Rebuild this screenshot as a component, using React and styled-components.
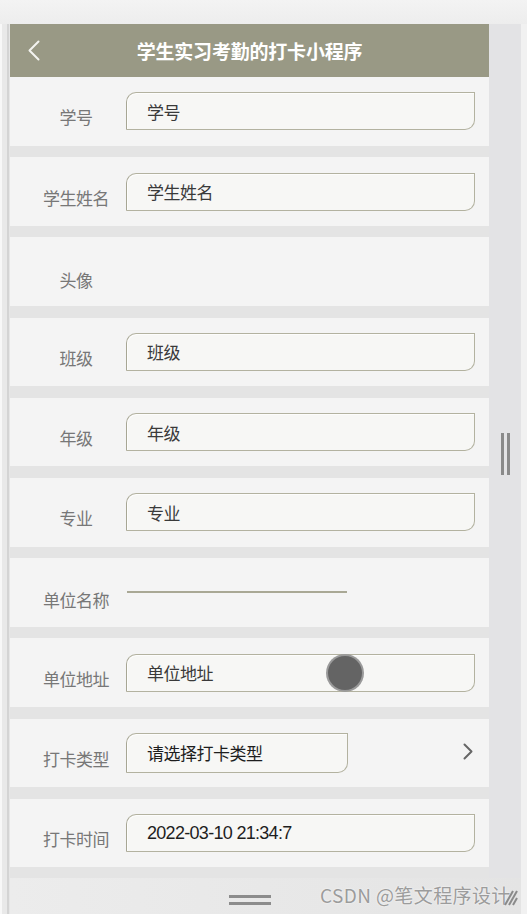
import React from "react";
import styled, { createGlobalStyle } from "styled-components";

const Global = createGlobalStyle`
  html, body { margin: 0; padding: 0; background: #efefef; }
  body { font-family: "Noto Sans CJK SC", "Noto Sans", sans-serif; }
  #root { width: 527px; height: 914px; overflow: hidden; }
`;

const Frame = styled.div`
  display: grid;
  grid-template-columns: 10px 479px 32px 6px;
  grid-template-rows: 24px 854px 36px;
  width: 527px;
  height: 914px;
  background: #f0f0f0;
`;

const TopStrip = styled.div`
  grid-column: 1 / 5;
  grid-row: 1;
  background: linear-gradient(to bottom, #f3f3f3, #ededed);
`;

const LeftEdge = styled.div`
  grid-column: 1;
  grid-row: 2 / 4;
  background: linear-gradient(
    to right,
    #f8f8f8 0 2px,
    #e9e9e9 2px 7px,
    #d4d4d4 7px 9px,
    #e6e6e6 9px
  );
`;

const Screen = styled.div`
  grid-column: 2;
  grid-row: 2;
  display: flex;
  flex-direction: column;
  background: #e4e4e4;
  overflow: hidden;
`;

const Header = styled.div`
  flex: 0 0 53px;
  display: grid;
  grid-template-columns: 48px 1fr 48px;
  align-items: center;
  background: #999985;
`;

const Back = styled.div`
  display: flex;
  justify-content: center;
  align-items: center;
`;

const Title = styled.div`
  text-align: center;
  color: #ffffff;
  font-size: 19px;
  font-weight: 700;
  letter-spacing: -0.2px;
`;

const Form = styled.div`
  display: flex;
  flex-direction: column;
  gap: 11.5px;
`;

const Row = styled.div`
  flex: 0 0 68.7px;
  display: flex;
  align-items: center;
  background: #f4f4f4;
`;

const Label = styled.div`
  flex: 0 0 88px;
  margin-left: 22px;
  margin-right: 6px;
  margin-top: ${(p) => (p.$low ? 15 : 11)}px;
  text-align: center;
  font-size: 17px;
  color: #777;
  white-space: nowrap;
  letter-spacing: -0.5px;
`;

const Field = styled.div`
  position: relative;
  box-sizing: border-box;
  flex: ${(p) => (p.$w ? `0 0 ${p.$w}px` : "1 1 auto")};
  height: ${(p) => p.$h || 38}px;
  margin-right: ${(p) => (p.$w ? 0 : 14)}px;
  display: flex;
  align-items: center;
  padding-left: 20px;
  background: #f7f7f5;
  border: 1px solid #b3b2a0;
  border-left: 1.5px solid #a7a694;
  border-radius: 10px 0 10px 0;
  box-shadow: inset 1px 1px 0 rgba(255, 255, 255, 0.7);
  font-size: 17px;
  color: ${(p) => (p.$dark ? "#1e1e1e" : "#3a3a3a")};
  letter-spacing: -0.5px;
  white-space: nowrap;
`;

const DateText = styled.span`
  font-family: "Liberation Sans", Arial, sans-serif;
  font-size: 18px;
  letter-spacing: -0.7px;
  color: #1e1e1e;
`;

const Underline = styled.div`
  flex: 0 0 220px;
  height: 2px;
  margin-left: 1px;
  background: #a9a895;
`;

const Knob = styled.div`
  position: absolute;
  left: 201px;
  top: 50%;
  width: 34px;
  height: 34px;
  margin-top: -17px;
  border-radius: 50%;
  background: #646464;
  box-shadow: 0 0 0 2px #9a9a9a;
`;

const Spacer = styled.div`
  flex: 1;
`;

const Arrow = styled.div`
  display: flex;
  margin-right: 16px;
  margin-top: -2px;
`;

const Track = styled.div`
  grid-column: 3;
  grid-row: 2;
  display: flex;
  justify-content: center;
  align-items: center;
  background: #e3e3e5;
`;

const Grip = styled.div`
  display: flex;
  gap: 3px;
  margin-left: 1px;
  margin-top: 6px;
`;

const GripBar = styled.div`
  width: 3px;
  height: 42px;
  background: #8a8a8a;
`;

const RightEdge = styled.div`
  grid-column: 4;
  grid-row: 2 / 4;
  background: #f1f1f1;
`;

const BottomBar = styled.div`
  position: relative;
  grid-column: 2 / 4;
  grid-row: 3;
  display: grid;
  grid-template-columns: 479px 32px;
  background: linear-gradient(to right, #ececec, #e4e4e4);
`;

const HandleCell = styled.div`
  display: flex;
  flex-direction: column;
  align-items: center;
  gap: 4px;
  padding-top: 17px;
`;

const HandleLine = styled.div`
  width: 42px;
  height: 3px;
  background: #8c8c8c;
`;

const Watermark = styled.div`
  position: absolute;
  left: 310px;
  top: 3px;
  font-size: 19px;
  color: #9c9c9c;
  letter-spacing: 0.4px;
  white-space: nowrap;
  text-shadow: 0 0 2px #fff;
`;

const Resize = styled.div`
  position: absolute;
  right: 3px;
  top: 10px;
  display: flex;
`;

const Chevron = ({ w, h, color, sw, left }) => (
  <svg width={w} height={h} viewBox={`0 0 ${w} ${h}`} fill="none">
    {left ? (
      <polyline
        points={`${w - 1.5},1.5 1.5,${h / 2} ${w - 1.5},${h - 1.5}`}
        stroke={color}
        strokeWidth={sw}
        strokeLinecap="round"
        strokeLinejoin="round"
      />
    ) : (
      <polyline
        points={`1.5,1.5 ${w - 1.5},${h / 2} 1.5,${h - 1.5}`}
        stroke={color}
        strokeWidth={sw}
        strokeLinecap="round"
        strokeLinejoin="round"
      />
    )}
  </svg>
);

export default function App() {
  return (
    <>
      <Global />
      <Frame>
        <TopStrip />
        <LeftEdge />
        <Screen>
          <Header>
            <Back>
              <Chevron w={12} h={21} color="#f4f4f0" sw={2} left />
            </Back>
            <Title>学生实习考勤的打卡小程序</Title>
            <div />
          </Header>
          <Form>
            <Row>
              <Label>学号</Label>
              <Field>学号</Field>
            </Row>
            <Row>
              <Label>学生姓名</Label>
              <Field>学生姓名</Field>
            </Row>
            <Row>
              <Label $low>头像</Label>
            </Row>
            <Row>
              <Label>班级</Label>
              <Field>班级</Field>
            </Row>
            <Row>
              <Label>年级</Label>
              <Field>年级</Field>
            </Row>
            <Row>
              <Label>专业</Label>
              <Field>专业</Field>
            </Row>
            <Row>
              <Label $low>单位名称</Label>
              <Underline />
            </Row>
            <Row>
              <Label>单位地址</Label>
              <Field>
                单位地址
                <Knob />
              </Field>
            </Row>
            <Row>
              <Label>打卡类型</Label>
              <Field $w={222} $h={40} $dark>
                请选择打卡类型
              </Field>
              <Spacer />
              <Arrow>
                <Chevron w={10} h={17} color="#666" sw={2} />
              </Arrow>
            </Row>
            <Row>
              <Label>打卡时间</Label>
              <Field>
                <DateText>2022-03-10 21:34:7</DateText>
              </Field>
            </Row>
          </Form>
        </Screen>
        <Track>
          <Grip>
            <GripBar />
            <GripBar />
          </Grip>
        </Track>
        <RightEdge />
        <BottomBar>
          <HandleCell>
            <HandleLine />
            <HandleLine />
          </HandleCell>
          <div />
          <Watermark>CSDN @笔文程序设计</Watermark>
          <Resize>
            <svg width="14" height="18" viewBox="0 0 14 18">
              <line x1="1" y1="17" x2="9" y2="3" stroke="#8a8a8a" strokeWidth="2" />
              <line x1="5" y1="17" x2="13" y2="3" stroke="#8a8a8a" strokeWidth="2" />
              <line x1="9" y1="17" x2="13" y2="10" stroke="#8a8a8a" strokeWidth="2" />
            </svg>
          </Resize>
        </BottomBar>
      </Frame>
    </>
  );
}
